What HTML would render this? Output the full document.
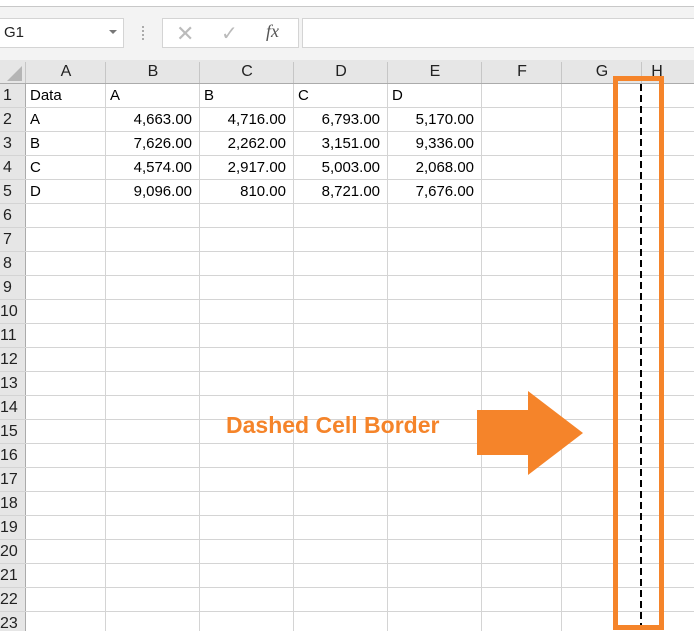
<!DOCTYPE html><html><head><style>
body{margin:0;width:694px;height:631px;overflow:hidden;background:#fff;font-family:"Liberation Sans",sans-serif;position:relative}
.a{position:absolute}
.cell{position:absolute;font-size:15px;color:#000;line-height:24px;box-sizing:border-box}
</style></head><body>
<div class="a" style="left:0;top:0;width:694px;height:6px;background:#fff;border-bottom:1px solid #c8c8c8"></div>
<div class="a" style="left:0;top:7px;width:694px;height:53px;background:#f3f3f3"></div>
<div class="a" style="left:0;top:18px;width:123px;height:28px;background:#fff;border:1px solid #d4d4d4;border-left:none"></div>
<div class="a" style="left:4px;top:24px;font-size:15px;color:#222">G1</div>
<div class="a" style="left:109px;top:30px;width:0;height:0;border-left:4px solid transparent;border-right:4px solid transparent;border-top:4px solid #777"></div>
<div class="a" style="left:142px;top:26px;width:2px;height:14px;border-left:2px dotted #aaa"></div>
<div class="a" style="left:162px;top:18px;width:135px;height:28px;background:#fff;border:1px solid #d4d4d4"></div>
<div class="a" style="left:176px;top:21px;font-size:22px;color:#bbb">✕</div>
<div class="a" style="left:221px;top:21px;font-size:20px;color:#bbb">✓</div>
<div class="a" style="left:266px;top:21px;font-size:18px;color:#555;font-style:italic;font-family:'Liberation Serif',serif">fx</div>
<div class="a" style="left:302px;top:18px;width:392px;height:28px;background:#fff;border:1px solid #d4d4d4"></div>
<!-- headers -->
<div class="a" style="left:0;top:60px;width:694px;height:23px;background:#e6e6e6;border-bottom:1px solid #ababab"></div>
<div class="a" style="left:0;top:84px;width:25px;height:547px;background:#e6e6e6;border-right:1px solid #ababab"></div>
<div class="a" style="left:7px;top:66px;width:0;height:0;border-left:15px solid transparent;border-bottom:15px solid #b5b5b5"></div>
<svg class="a" style="left:0;top:0" width="694" height="631">
<g stroke="#d4d4d4" stroke-width="1">
<line x1="105.5" y1="84" x2="105.5" y2="631"/><line x1="199.5" y1="84" x2="199.5" y2="631"/><line x1="293.5" y1="84" x2="293.5" y2="631"/><line x1="387.5" y1="84" x2="387.5" y2="631"/><line x1="481.5" y1="84" x2="481.5" y2="631"/><line x1="561.5" y1="84" x2="561.5" y2="631"/>
</g>
<g stroke="#c6c6c6"><line x1="25.5" y1="62" x2="25.5" y2="83"/><line x1="105.5" y1="62" x2="105.5" y2="83"/><line x1="199.5" y1="62" x2="199.5" y2="83"/><line x1="293.5" y1="62" x2="293.5" y2="83"/><line x1="387.5" y1="62" x2="387.5" y2="83"/><line x1="481.5" y1="62" x2="481.5" y2="83"/><line x1="561.5" y1="62" x2="561.5" y2="83"/><line x1="641.5" y1="62" x2="641.5" y2="83"/></g>
<g id="rows" stroke="#d4d4d4"></g>
<line x1="641" y1="84" x2="641" y2="631" stroke="#000" stroke-width="2" stroke-dasharray="7,4"/>
<rect x="615.5" y="78.5" width="46" height="549" fill="none" stroke="#f5842a" stroke-width="5"/>
<polygon points="477,410 528,410 528,391 583,433 528,475 528,455 477,455" fill="#f5842a"/>
</svg>
<div class="a" style="left:226px;top:412px;font-size:23px;font-weight:bold;color:#f5842a">Dashed Cell Border</div>
<div id="c"></div>
<script>
var s='',g='';
for(var i=1;i<=23;i++){var y=84+i*24-0.5;g+='<line x1="0" y1="'+y+'" x2="694" y2="'+y+'" stroke="'+'#d4d4d4'+'"/>';
s+='<div class="cell" style="left:0;top:'+(84+(i-1)*24)+'px;width:25px;text-align:'+(i<10?'left;padding-left:3px':'left;padding-left:0px')+';font-size:16px;color:#222">'+i+'</div>';}
document.getElementById('rows').innerHTML=g;
var cols=[[26,106,'A'],[106,200,'B'],[200,294,'C'],[294,388,'D'],[388,482,'E'],[482,562,'F'],[562,642,'G'],[642,722,'H']];
cols.forEach(function(c){s+='<div class="cell" style="left:'+c[0]+'px;top:60px;width:'+(c[1]-c[0])+'px;text-align:center;font-size:16px;color:#222">'+(c[2]=='H'?'<span style="margin-left:-50px">H</span>':c[2])+'</div>';});
var d=[['Data','A','B','C','D'],['A','4,663.00','4,716.00','6,793.00','5,170.00'],['B','7,626.00','2,262.00','3,151.00','9,336.00'],['C','4,574.00','2,917.00','5,003.00','2,068.00'],['D','9,096.00','810.00','8,721.00','7,676.00']];
d.forEach(function(r,ri){r.forEach(function(v,ci){var c=cols[ci];var num=ri>0&&ci>0;
s+='<div class="cell" style="left:'+c[0]+'px;top:'+(84+ri*24)+'px;width:'+(c[1]-c[0])+'px;'+(num?'text-align:right;padding-right:8px':'padding-left:4px')+'">'+v+'</div>';});});
document.getElementById('c').innerHTML=s;
</script>
</body></html>
